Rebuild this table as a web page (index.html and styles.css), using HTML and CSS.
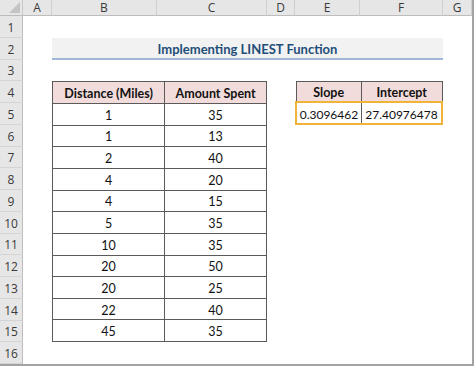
FILE: index.html
```html
<!DOCTYPE html>
<html lang="en">
<head>
    <meta charset="UTF-8">
    <meta name="viewport" content="width=device-width, initial-scale=1.0">
    <title>Implementing LINEST Function</title>
    <link rel="stylesheet" href="styles.css">
</head>
<body>
    <div class="sheet">
        <div class="corner"><div class="corner-tri"></div></div>
        <div class="col-head">A</div>
        <div class="col-head">B</div>
        <div class="col-head">C</div>
        <div class="col-head">D</div>
        <div class="col-head">E</div>
        <div class="col-head">F</div>
        <div class="col-head">G</div>

        <div class="row-head r1">1</div>
        <div class="row-head r2">2</div>
        <div class="row-head r3">3</div>
        <div class="row-head r4">4</div>
        <div class="row-head r5">5</div>
        <div class="row-head r6">6</div>
        <div class="row-head r7">7</div>
        <div class="row-head r8">8</div>
        <div class="row-head r9">9</div>
        <div class="row-head r10">10</div>
        <div class="row-head r11">11</div>
        <div class="row-head r12">12</div>
        <div class="row-head r13">13</div>
        <div class="row-head r14">14</div>
        <div class="row-head r15">15</div>
        <div class="row-head r16">16</div>

        <div class="title">Implementing LINEST Function</div>

        <table class="data-table">
            <tr><th>Distance (Miles)</th><th>Amount Spent</th></tr>
            <tr><td>1</td><td>35</td></tr>
            <tr><td>1</td><td>13</td></tr>
            <tr><td>2</td><td>40</td></tr>
            <tr><td>4</td><td>20</td></tr>
            <tr><td>4</td><td>15</td></tr>
            <tr><td>5</td><td>35</td></tr>
            <tr><td>10</td><td>35</td></tr>
            <tr><td>20</td><td>50</td></tr>
            <tr><td>20</td><td>25</td></tr>
            <tr><td>22</td><td>40</td></tr>
            <tr><td>45</td><td>35</td></tr>
        </table>

        <table class="result-table">
            <tr><th>Slope</th><th>Intercept</th></tr>
            <tr class="selected"><td>0.3096462</td><td>27.40976478</td></tr>
        </table>
    </div>
</body>
</html>
```

FILE: styles.css
```css
body {
    margin: 0;
    background: #a3a3a3;
    font-family: Lato, "Open Sans", sans-serif;
}

.sheet {
    width: 472px;
    height: 364px;
    overflow: hidden;
    background: white;
    display: grid;
    grid-template-columns: 23px 29px 105px 110px 28px 65px 83px 29px;
    grid-template-rows: 16px repeat(16, 21.75px);
}

.corner {
    grid-row: 1;
    grid-column: 1;
    background: #e6e6e6;
    border-right: 1px solid #c8c8c8;
    border-bottom: 1px solid #bdbdbd;
    position: relative;
}

.corner-tri {
    position: absolute;
    right: 2px;
    bottom: 2px;
    width: 0;
    height: 0;
    border-left: 11px solid transparent;
    border-bottom: 11px solid #c4c4c4;
}

.col-head {
    grid-row: 1;
    background: #e6e6e6;
    border-right: 1px solid #cfcfcf;
    border-bottom: 1px solid #bdbdbd;
    color: #3a3a3a;
    font-family: "Open Sans", sans-serif;
    font-size: 12px;
    display: flex;
    align-items: center;
    justify-content: center;
}

.row-head {
    grid-column: 1;
    background: #e6e6e6;
    border-right: 1px solid #bdbdbd;
    border-bottom: 1px solid #d4d4d4;
    color: #3a3a3a;
    font-family: "Open Sans", sans-serif;
    font-size: 12px;
    display: flex;
    align-items: flex-end;
    justify-content: center;
    padding-bottom: 1px;
}

.r1 { grid-row: 2; }
.r2 { grid-row: 3; }
.r3 { grid-row: 4; }
.r4 { grid-row: 5; }
.r5 { grid-row: 6; }
.r6 { grid-row: 7; }
.r7 { grid-row: 8; }
.r8 { grid-row: 9; }
.r9 { grid-row: 10; }
.r10 { grid-row: 11; }
.r11 { grid-row: 12; }
.r12 { grid-row: 13; }
.r13 { grid-row: 14; }
.r14 { grid-row: 15; }
.r15 { grid-row: 16; }
.r16 { grid-row: 17; }

.title {
    grid-row: 3;
    grid-column: 3 / 8;
    background: #f2f2f2;
    border-bottom: 2px solid #9fb8d8;
    color: #1f4e79;
    font-weight: bold;
    font-size: 13px;
    display: flex;
    align-items: center;
    justify-content: center;
    padding-top: 2px;
}

table {
    border-collapse: collapse;
    width: 100%;
    height: 100%;
    font-size: 12.5px;
    color: #111;
}

th, td {
    border: 1px solid #5a5a5a;
    text-align: center;
    padding: 2px 0 0;
    vertical-align: middle;
}

th {
    background: #f2dcdb;
    font-weight: bold;
}

.data-table {
    grid-row: 5 / 17;
    grid-column: 3 / 5;
}

.result-table {
    grid-row: 5 / 7;
    grid-column: 6 / 8;
}

.result-table td {
    font-size: 12px;
}

.selected td {
    border-top: 2px solid #f0b43a;
    border-bottom: 2px solid #f0b43a;
}

.selected td:first-child {
    border-left: 2px solid #f0b43a;
}

.selected td:last-child {
    border-right: 2px solid #f0b43a;
}
```
